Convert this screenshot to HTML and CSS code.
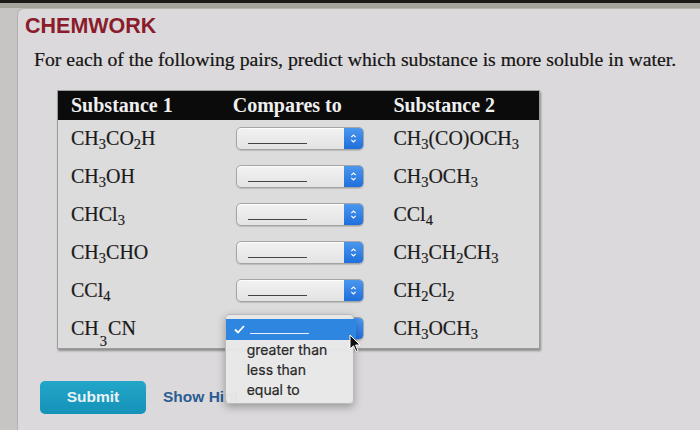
FILE: index.html
```html
<!DOCTYPE html>
<html>
<head>
<meta charset="utf-8">
<link rel="stylesheet" href="styles.css">
</head>
<body>
<div class="bezel"></div>
<div class="topband"></div>
<div class="screen">
  <div class="panel">
    <h1 class="brand">CHEMWORK</h1>
    <p class="prompt">For each of the following pairs, predict which substance is more soluble in water.</p>
    <table class="grid">
      <thead>
        <tr><th class="c1">Substance 1</th><th class="c2">Compares to</th><th class="c3">Substance 2</th></tr>
      </thead>
      <tbody>
        <tr>
          <td class="c1">CH<sub>3</sub>CO<sub>2</sub>H</td>
          <td class="c2"><div class="select"><span class="blank"></span><span class="arrow"><svg viewBox="0 0 8 12" width="7" height="11"><path d="M1.5 4.5 L4 2 L6.5 4.5 M1.5 7.5 L4 10 L6.5 7.5" fill="none" stroke="#fff" stroke-width="1.3"/></svg></span></div></td>
          <td class="c3">CH<sub>3</sub>(CO)OCH<sub>3</sub></td>
        </tr>
        <tr>
          <td class="c1">CH<sub>3</sub>OH</td>
          <td class="c2"><div class="select"><span class="blank"></span><span class="arrow"><svg viewBox="0 0 8 12" width="7" height="11"><path d="M1.5 4.5 L4 2 L6.5 4.5 M1.5 7.5 L4 10 L6.5 7.5" fill="none" stroke="#fff" stroke-width="1.3"/></svg></span></div></td>
          <td class="c3">CH<sub>3</sub>OCH<sub>3</sub></td>
        </tr>
        <tr>
          <td class="c1">CHCl<sub>3</sub></td>
          <td class="c2"><div class="select"><span class="blank"></span><span class="arrow"><svg viewBox="0 0 8 12" width="7" height="11"><path d="M1.5 4.5 L4 2 L6.5 4.5 M1.5 7.5 L4 10 L6.5 7.5" fill="none" stroke="#fff" stroke-width="1.3"/></svg></span></div></td>
          <td class="c3">CCl<sub>4</sub></td>
        </tr>
        <tr>
          <td class="c1">CH<sub>3</sub>CHO</td>
          <td class="c2"><div class="select"><span class="blank"></span><span class="arrow"><svg viewBox="0 0 8 12" width="7" height="11"><path d="M1.5 4.5 L4 2 L6.5 4.5 M1.5 7.5 L4 10 L6.5 7.5" fill="none" stroke="#fff" stroke-width="1.3"/></svg></span></div></td>
          <td class="c3">CH<sub>3</sub>CH<sub>2</sub>CH<sub>3</sub></td>
        </tr>
        <tr>
          <td class="c1">CCl<sub>4</sub></td>
          <td class="c2"><div class="select"><span class="blank"></span><span class="arrow"><svg viewBox="0 0 8 12" width="7" height="11"><path d="M1.5 4.5 L4 2 L6.5 4.5 M1.5 7.5 L4 10 L6.5 7.5" fill="none" stroke="#fff" stroke-width="1.3"/></svg></span></div></td>
          <td class="c3">CH<sub>2</sub>Cl<sub>2</sub></td>
        </tr>
        <tr>
          <td class="c1">CH<sub class="low">3</sub>CN</td>
          <td class="c2 open">
            <div class="select"><span class="blank"></span><span class="arrow"><svg viewBox="0 0 8 12" width="7" height="11"><path d="M1.5 4.5 L4 2 L6.5 4.5 M1.5 7.5 L4 10 L6.5 7.5" fill="none" stroke="#fff" stroke-width="1.3"/></svg></span></div>
            <div class="menu">
              <div class="item current"><svg class="check" viewBox="0 0 11 9" width="11" height="9"><path d="M1 4.5 L4 7.5 L10 1" fill="none" stroke="#fff" stroke-width="1.8"/></svg><span class="blank light"></span></div>
              <div class="item">greater than</div>
              <div class="item">less than</div>
              <div class="item">equal to</div>
            </div>
            <svg class="cursor" viewBox="0 0 12 19" width="12" height="19"><path d="M1 1 L1 15 L4.5 11.8 L7 17.5 L9 16.6 L6.6 11 L11 11 Z" fill="#111" stroke="#fff" stroke-width="1"/></svg>
          </td>
          <td class="c3">CH<sub>3</sub>OCH<sub>3</sub></td>
        </tr>
      </tbody>
    </table>
    <div class="actions">
      <button class="submit">Submit</button>
      <span class="hint">Show Hint</span>
    </div>
  </div>
</div>
</body>
</html>
```
FILE: styles.css
```css
html, body {
  margin: 0;
  padding: 0;
}
body {
  width: 700px;
  height: 430px;
  overflow: hidden;
  background: #c6c5c3;
}
.bezel {
  height: 3px;
  background: #1a1a18;
}
.topband {
  height: 5px;
  background: #a4a49c;
}
.screen {
  display: flex;
  padding-left: 17px;
  height: 422px;
}
.panel {
  flex: 1;
  position: relative;
  background: #dbd9db;
  border-left: 1px solid #b3b2b0;
  border-top: 1px solid #b8b7b2;
  border-top-left-radius: 7px;
  padding: 0;
}
.brand {
  margin: 0;
  padding: 5px 0 0 7px;
  font-family: "Liberation Sans", Arial, sans-serif;
  font-weight: bold;
  font-size: 21.5px;
  line-height: 24px;
  color: #8a1c2b;
}
.prompt {
  margin: 10px 0 0 16px;
  font-family: "Liberation Serif", "Times New Roman", serif;
  font-size: 19.75px;
  line-height: 22px;
  color: #141414;
  white-space: nowrap;
  -webkit-text-stroke: 0.2px #141414;
}
.grid {
  margin: 20px 0 0 39px;
  border-collapse: collapse;
  width: 483px;
  background: #dddcdc;
  border: 1px solid #9c9c9c;
  box-shadow: 1px 2px 2px rgba(0,0,0,0.35);
  font-family: "Liberation Serif", "Times New Roman", serif;
  color: #1a1a1a;
}
.grid thead tr {
  background: #0b0b0b;
  height: 29px;
}
.grid th {
  color: #efefef;
  font-size: 20px;
  font-weight: bold;
  text-align: left;
  padding: 0;
}
.grid td {
  height: 38px;
  padding: 0;
  font-size: 20px;
  vertical-align: middle;
  -webkit-text-stroke: 0.2px #1a1a1a;
}
.grid sub {
  font-size: 14.5px;
  vertical-align: -4px;
  line-height: 0;
}
.grid sub.low {
  vertical-align: -11px;
  margin: 0 1px;
}
th.c1, td.c1 { width: 155px; padding-left: 13px; }
th.c2 { width: 147px; padding-left: 8px; }
td.c2 { width: 144px; padding-left: 11px; position: relative; }
th.c3, td.c3 { width: 146px; padding-left: 14px; }

.select {
  position: relative;
  width: 126px;
  height: 21px;
  border: 1px solid #a4a4a4;
  border-radius: 5px;
  background: linear-gradient(#f2f2f2, #e3e3e3);
  box-shadow: inset 0 1px 1px rgba(255,255,255,0.8), 0 1px 1px rgba(0,0,0,0.15);
  display: flex;
  align-items: center;
  overflow: hidden;
}
.blank {
  display: block;
  width: 59px;
  height: 0;
  border-bottom: 1.5px solid #444;
  margin: 9px 0 0 11px;
}
.blank.light {
  border-bottom-color: #e9f1fb;
  margin: 8px 0 0 5px;
}
.arrow {
  margin-left: auto;
  width: 19px;
  height: 100%;
  background: linear-gradient(#4a97ee, #1f6fdc);
  display: flex;
  align-items: center;
  justify-content: center;
}

.menu {
  position: absolute;
  left: 0;
  top: 4px;
  width: 127px;
  padding: 4px 0 3px;
  background: rgba(232,232,232,0.97);
  border: 1px solid #b9b9b9;
  border-radius: 4px;
  box-shadow: 0 3px 8px rgba(0,0,0,0.3);
  font-family: Inter, "Liberation Sans", sans-serif;
  font-size: 14px;
  color: #2b2b2b;
  z-index: 5;
}
.item {
  height: 20px;
  line-height: 20px;
  padding-left: 21px;
}
.item.current {
  height: 21px;
  padding-left: 8px;
  margin-right: -3px;
  background: #2e86e0;
  display: flex;
  align-items: center;
}
.check { display: block; }
.cursor {
  position: absolute;
  left: 124px;
  top: 24px;
  z-index: 6;
}

.actions {
  display: flex;
  align-items: center;
  margin: 32px 0 0 22px;
}
.submit {
  width: 106px;
  height: 33px;
  border: none;
  border-radius: 5px;
  background: linear-gradient(#22a6c8, #1592b8);
  color: #e9f3f6;
  font-family: "Liberation Sans", Arial, sans-serif;
  font-weight: bold;
  font-size: 15.5px;
  padding: 0;
}
.hint {
  margin-left: 17px;
  font-family: "Liberation Sans", Arial, sans-serif;
  font-weight: bold;
  font-size: 15.5px;
  color: #2b5c92;
}
```
